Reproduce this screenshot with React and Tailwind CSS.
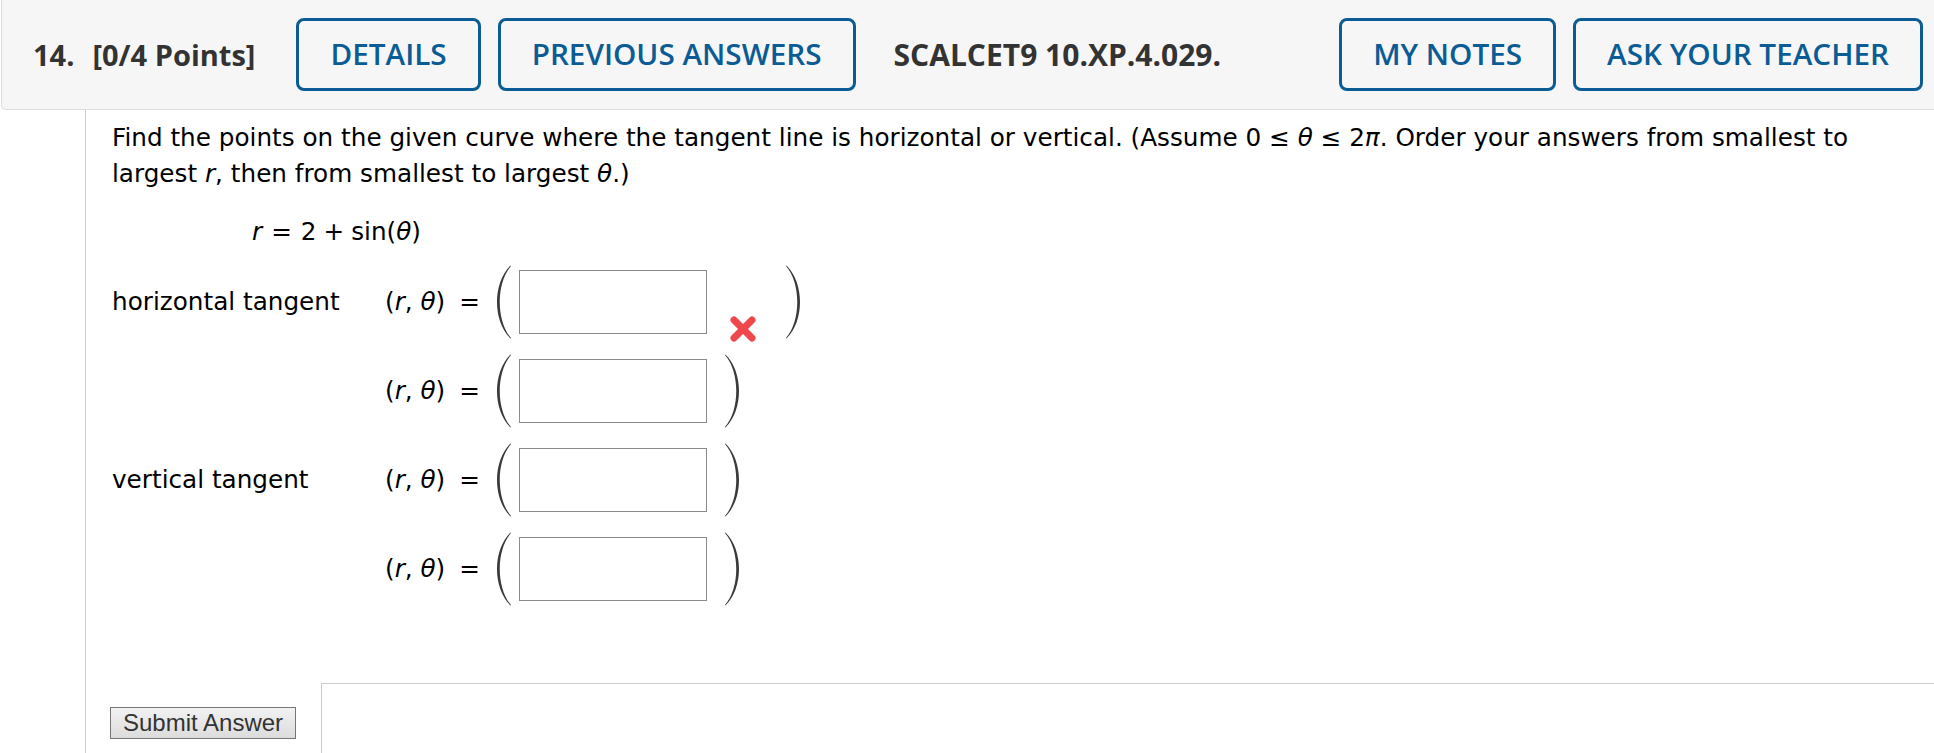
import React from "react";

const Paren = ({ right = false }) => (
  <svg
    width="18"
    height="74"
    viewBox="0 0 18 74"
    className={right ? "-scale-x-100" : ""}
  >
    <path
      d="M16.5 0.5 C-1.5 18 -1.5 56 16.5 73.5 L17 73 C2 56 2 18 17 1 Z"
      fill="#3a3a3a"
    />
  </svg>
);

const WrongMark = () => (
  <svg width="28" height="28" viewBox="0 0 28 28">
    <path
      d="M5 5 L23 23 M23 5 L5 23"
      stroke="#f0474d"
      strokeWidth="7"
      strokeLinecap="round"
    />
  </svg>
);

const Pair = () => (
  <span className="whitespace-nowrap">
    (<i>r</i>, <i>θ</i>)
  </span>
);

const AnswerRow = ({ label, wrong }) => (
  <div className="flex items-center h-[73px]">
    <div className="w-[273px]">{label}</div>
    <Pair />
    <span className="ml-[14px]">=</span>
    <div className="ml-[14px] flex items-center">
      <Paren />
      <input
        type="text"
        className="ml-[7px] w-[188px] h-[64px] border border-[#8a8a8a] bg-white outline-none"
      />
      {wrong && (
        <div className="self-end mb-[-4px] ml-[22px]">
          <WrongMark />
        </div>
      )}
      <div className={wrong ? "ml-[28px]" : "ml-[17px]"}>
        <Paren right />
      </div>
    </div>
  </div>
);

const HeaderButton = ({ children }) => (
  <button className="h-[73px] px-[31px] border-[3px] border-[#0b5c94] rounded-[8px] text-[29.7px] font-semibold text-[#0b5c94] bg-[#f6f6f6] font-['Open_Sans',sans-serif]">
    {children}
  </button>
);

const App = () => {
  return (
    <div className="h-[753px] overflow-hidden bg-white">
      <div className="flex items-center h-[110px] bg-[#f6f6f6] border border-t-0 border-r-0 border-[#dcdcdc] rounded-bl-[5px] ml-px pl-[31px] pr-[11px] font-['Open_Sans',sans-serif] text-[#333]">
        <span className="text-[29px] font-bold">14.</span>
        <span className="text-[29px] font-bold ml-[18px]">[0/4 Points]</span>
        <div className="ml-[41px] flex gap-[17px]">
          <HeaderButton>DETAILS</HeaderButton>
          <HeaderButton>PREVIOUS ANSWERS</HeaderButton>
        </div>
        <span className="ml-[38px] text-[30px] font-bold">SCALCET9 10.XP.4.029.</span>
        <div className="ml-auto flex gap-[17px]">
          <HeaderButton>MY NOTES</HeaderButton>
          <HeaderButton>ASK YOUR TEACHER</HeaderButton>
        </div>
      </div>

      <div className="ml-[85px] border-l border-[#cccccc] h-full pl-[24px] pt-[10px] font-['DejaVu_Sans',Verdana,sans-serif] text-[24.7px] leading-[36px] text-black">
        <p className="pl-[2px] pr-[60px]">
          Find the points on the given curve where the tangent line is horizontal or vertical. (Assume 0 ≤ <i>θ</i> ≤ 2<i>π</i>. Order your answers from smallest to largest <i>r</i>, then from smallest to largest <i>θ</i>.)
        </p>

        <div className="mt-[22px] pl-[142px]">
          <i>r</i>
          <span className="mx-[9px]">=</span>2
          <span className="mx-[7px]">+</span>sin(<i>θ</i>)
        </div>

        <div className="mt-[15px] pl-[2px] flex flex-col gap-[16px]">
          <AnswerRow label="horizontal tangent" wrong />
          <AnswerRow />
          <AnswerRow label="vertical tangent" />
          <AnswerRow />
        </div>

        <div className="flex items-start mt-[78px]">
          <button className="mt-[24px] h-[32px] px-[12px] border border-[#767676] bg-gradient-to-b from-[#f2f2f2] to-[#dcdcdc] text-[24px] leading-[28px] text-[#333] font-['Liberation_Sans',Arial,sans-serif]">
            Submit Answer
          </button>
          <div className="ml-[25px] flex-1 h-[100px] border-t border-l border-[#cccccc]"></div>
        </div>
      </div>
    </div>
  );
};

export default App;
